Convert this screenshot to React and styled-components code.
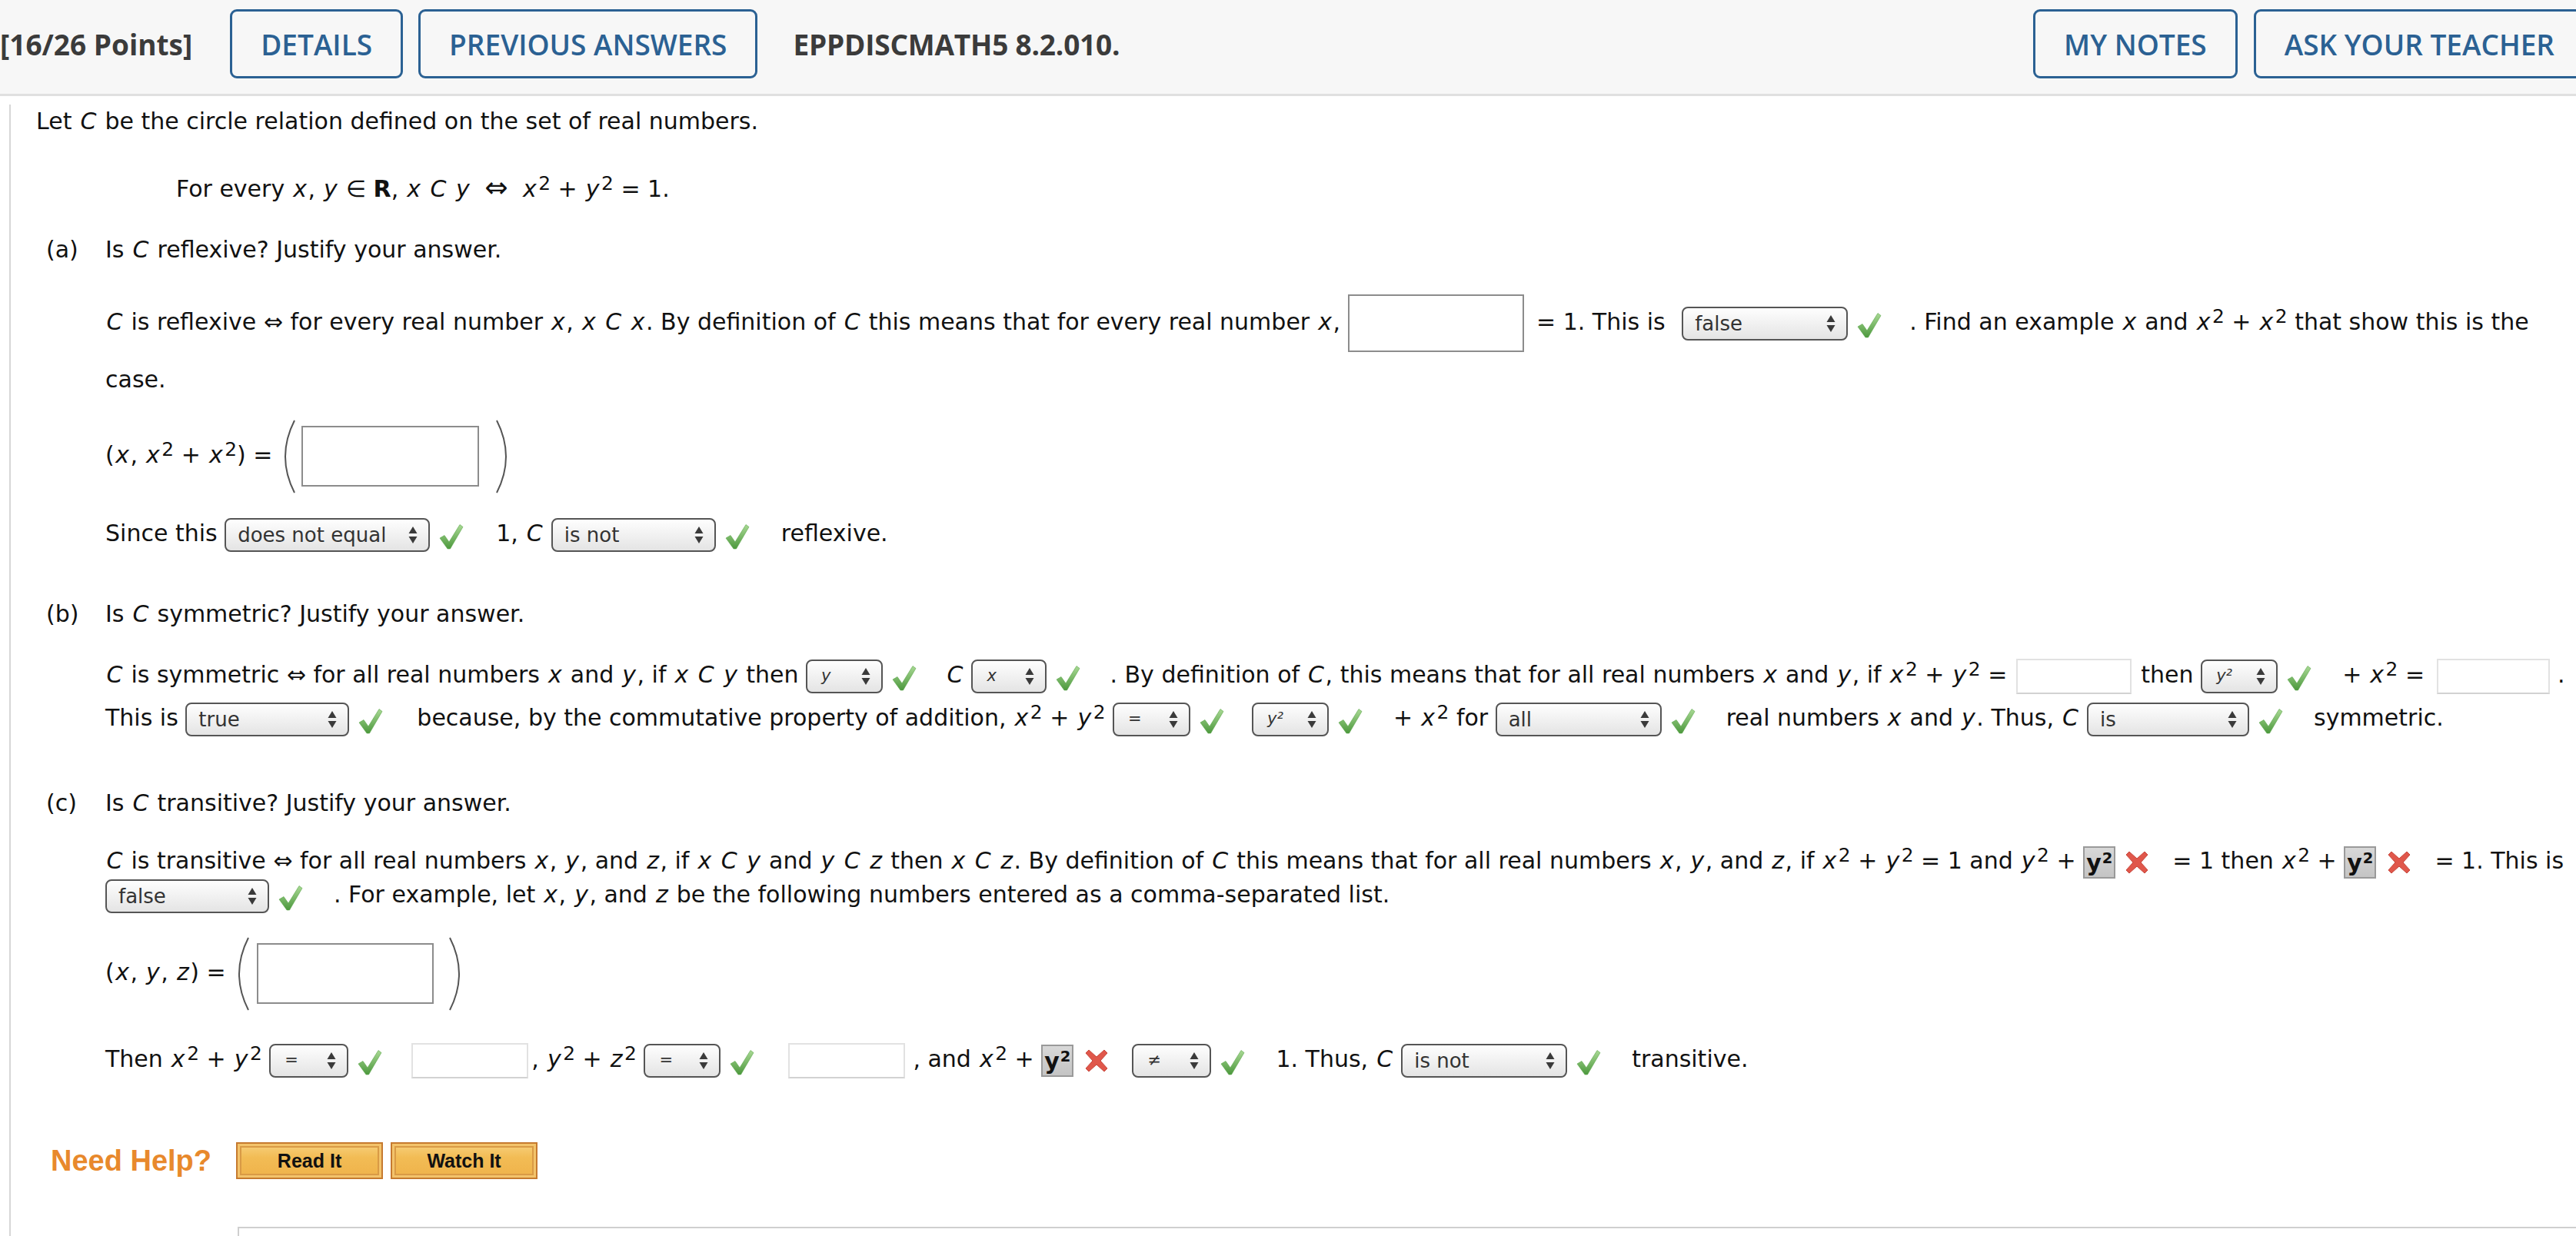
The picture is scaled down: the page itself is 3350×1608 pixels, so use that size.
import React from "react";
import styled, { createGlobalStyle } from "styled-components";

const GlobalStyle = createGlobalStyle`
  html, body { margin: 0; padding: 0; background: #fff; }
  body {
    font-family: "DejaVu Sans", Verdana, sans-serif;
    color: #111;
    overflow: hidden;
  }
  sup {
    font-size: 0.83em;
    vertical-align: 0.36em;
    line-height: 0;
    margin-left: 1px;
  }
`;

const Page = styled.div`
  width: 3350px;
  height: 1608px;
  overflow: hidden;
`;

const Header = styled.header`
  display: flex;
  align-items: center;
  box-sizing: border-box;
  height: 125px;
  padding-bottom: 8px;
  background: #f7f7f7;
  border-bottom: 3px solid #e0e0e0;
  font-family: "Open Sans", sans-serif;
  font-size: 37px;
  overflow: hidden;
`;

const Points = styled.div`
  font-weight: 700;
  color: #3b3b3b;
  margin-right: 49px;
  flex-shrink: 0;
`;

const ButtonGroup = styled.div`
  display: flex;
  gap: ${(p) => p.$gap || 20}px;
  flex-shrink: 0;
  ${(p) => p.$right && "margin-left: auto; margin-right: -12px;"}
`;

const HeaderButton = styled.div`
  display: flex;
  align-items: center;
  box-sizing: border-box;
  height: 90px;
  padding: 0 37px;
  border: 3px solid #2b6193;
  border-radius: 9px;
  color: #2b6193;
  font-weight: 600;
  flex-shrink: 0;
`;

const QuestionId = styled.div`
  font-weight: 700;
  color: #3b3b3b;
  margin-left: 46px;
  letter-spacing: -0.2px;
  flex-shrink: 0;
`;

const Body = styled.main`
  margin-left: 12px;
  border-left: 2px solid #d6d6d6;
  padding-left: 33px;
  height: 1483px;
  font-size: 30px;
`;

const Line = styled.div`
  height: ${(p) => p.$h || 44}px;
  line-height: ${(p) => p.$h || 44}px;
  margin-top: ${(p) => p.$mt || 0}px;
  padding-left: ${(p) => p.$indent || 0}px;
  white-space: nowrap;
`;

const PartLabel = styled.span`
  display: inline-block;
  width: 77px;
`;

const I = styled.i`
  font-style: italic;
  padding: 0 1.5px;
`;

const B = styled.b`
  font-weight: 700;
`;

const Arrow = styled.span`
  font-size: ${(p) => p.$size || 30}px;
  margin: 0 ${(p) => p.$space || 0}px;
`;

const SelectBox = styled.span`
  display: inline-flex;
  align-items: center;
  justify-content: space-between;
  box-sizing: border-box;
  width: ${(p) => p.$w}px;
  height: 44px;
  margin-left: ${(p) => p.$ml || 0}px;
  padding: 0 14px 0 ${(p) => (p.$small ? 18 : 15)}px;
  border: 2px solid #555;
  border-radius: 8px;
  background: linear-gradient(#fefefe, #f1f1f1 50%, #e4e4e4);
  font-family: "DejaVu Sans", sans-serif;
  font-size: ${(p) => (p.$small ? 21 : 26)}px;
  color: #333;
  line-height: 1;
  vertical-align: middle;
`;

const SelectText = styled.span`
  font-style: ${(p) => (p.$italic ? "italic" : "normal")};
  white-space: nowrap;
`;

const ArrowSvg = styled.svg`
  flex-shrink: 0;
  margin-left: 8px;
`;

const Select = ({ w, ml, small, italic, children }) => (
  <SelectBox $w={w} $ml={ml} $small={small}>
    <SelectText $italic={italic}>{children}</SelectText>
    <ArrowSvg width="12" height="24" viewBox="0 0 12 24">
      <path d="M6 1 L11.5 10 L0.5 10 Z" fill="#3a3a3a" />
      <path d="M0.5 14 L11.5 14 L6 23 Z" fill="#3a3a3a" />
    </ArrowSvg>
  </SelectBox>
);

const CheckSvg = styled.svg`
  vertical-align: middle;
  margin: 4px ${(p) => p.$after ?? 36}px 0 12px;
`;

const Check = ({ after }) => (
  <CheckSvg $after={after} width="32" height="34" viewBox="0 0 32 34">
    <defs>
      <linearGradient id="chkfill" x1="0" y1="0" x2="0" y2="1">
        <stop offset="0" stopColor="#a9d994" />
        <stop offset="1" stopColor="#4c983d" />
      </linearGradient>
    </defs>
    <path
      d="M1 19 L7 15.5 L13 24 L27 1.5 L31 4.5 L14.5 33 L11 33 Z"
      fill="url(#chkfill)"
      stroke="#5aa64a"
      strokeWidth="0.6"
    />
  </CheckSvg>
);

const CrossSvg = styled.svg`
  vertical-align: middle;
  margin: 0 ${(p) => p.$after ?? 30}px 0 ${(p) => p.$before ?? 14}px;
`;

const Cross = ({ after, before }) => (
  <CrossSvg $after={after} $before={before} width="32" height="32" viewBox="0 0 32 32">
    <path
      d="M6 2 L16 11 L26 2 L30 6 L21 16 L30 26 L26 30 L16 21 L6 30 L2 26 L11 16 L2 6 Z"
      fill="#e0574b"
      stroke="#c7463b"
      strokeWidth="1"
      strokeLinejoin="round"
    />
  </CrossSvg>
);

const TextInput = styled.span`
  display: inline-block;
  box-sizing: border-box;
  width: ${(p) => p.$w}px;
  height: ${(p) => p.$h}px;
  margin: 0 ${(p) => p.$mr ?? p.$mx ?? 8}px 0 ${(p) => p.$mx ?? 8}px;
  border: 2px solid ${(p) => (p.$light ? "#e2e2e2" : "#8c8c8c")};
  ${(p) => p.$light && "border-bottom-color: #d2d2d2;"}
  background: #fff;
  vertical-align: middle;
`;

const Marked = styled.span`
  display: inline-block;
  box-sizing: border-box;
  height: 42px;
  padding: 0 2px;
  line-height: 40px;
  background: linear-gradient(#d8d8d8, #c4c4c4);
  border: 2px solid #9a9a9a;
  font-weight: 700;
  vertical-align: middle;

  sup {
    font-size: 0.65em;
    vertical-align: 0.5em;
  }
`;

const ParenSvg = styled.svg`
  vertical-align: middle;
  margin: 0 ${(p) => p.$mr ?? 4}px 0 ${(p) => p.$ml ?? 4}px;
`;

const Paren = ({ right, ml, mr }) => (
  <ParenSvg $ml={ml} $mr={mr} width="26" height="98" viewBox="0 0 26 98">
    <path
      d={right ? "M3 2 Q27 49 3 96" : "M23 2 Q-1 49 23 96"}
      stroke="#555"
      strokeWidth="2"
      fill="none"
    />
  </ParenSvg>
);

const HelpRow = styled.div`
  display: flex;
  align-items: center;
  gap: 10px;
  height: 50px;
  margin-top: ${(p) => p.$mt || 0}px;
  padding-left: 19px;
`;

const HelpText = styled.span`
  font-family: "Liberation Sans", Arial, sans-serif;
  font-weight: 700;
  font-size: 38px;
  color: #e8892c;
  margin-right: 22px;
`;

const HelpButton = styled.div`
  display: flex;
  align-items: center;
  justify-content: center;
  box-sizing: border-box;
  width: 191px;
  height: 48px;
  border: 2px solid #c67a2f;
  background: linear-gradient(#f7d07c, #f2bc55 40%, #efb24a);
  box-shadow: inset 0 0 0 3px #f3c36b, inset 0 0 0 5px #d99a45;
  font-family: "Liberation Sans", Arial, sans-serif;
  font-weight: 700;
  font-size: 25px;
  color: #111;
`;

const NextBox = styled.div`
  margin-top: ${(p) => p.$mt || 0}px;
  margin-left: 262px;
  height: 200px;
  border-top: 2px solid #cfcfcf;
  border-left: 2px solid #cfcfcf;
`;

const App = () => {
  return (
    <Page>
      <GlobalStyle />
      <Header>
        <Points>[16/26 Points]</Points>
        <ButtonGroup>
          <HeaderButton>DETAILS</HeaderButton>
          <HeaderButton>PREVIOUS ANSWERS</HeaderButton>
        </ButtonGroup>
        <QuestionId>EPPDISCMATH5 8.2.010.</QuestionId>
        <ButtonGroup $right $gap={21}>
          <HeaderButton>MY NOTES</HeaderButton>
          <HeaderButton>ASK YOUR TEACHER</HeaderButton>
        </ButtonGroup>
      </Header>

      <Body>
        <Line $mt={11}>
          Let <I>C</I> be the circle relation defined on the set of real numbers.
        </Line>
        <Line $mt={42} $indent={182}>
          For every <I>x</I>, <I>y</I> ∈ <B>R</B>, <I>x</I> <I>C</I> <I>y</I>
          <Arrow $size={36} $space={18}>⇔</Arrow>
          <I>x</I>
          <sup>2</sup> + <I>y</I>
          <sup>2</sup> = 1.
        </Line>

        <Line $mt={37} $indent={13}>
          <PartLabel>(a)</PartLabel>Is <I>C</I> reflexive? Justify your answer.
        </Line>
        <Line $h={80} $mt={32} $indent={90}>
          <I>C</I> is reflexive <Arrow>⇔</Arrow> for every real number <I>x</I>,{" "}
          <I>x</I> <I>C</I> <I>x</I>. By definition of <I>C</I> this means that for
          every real number <I>x</I>,
          <TextInput $w={229} $h={75} $mx={10} $mr={16} />= 1. This is{" "}
          <Select w={216} ml={12}>
            false
          </Select>
          <Check />. Find an example <I>x</I> and <I>x</I>
          <sup>2</sup> + <I>x</I>
          <sup>2</sup> that show this is the
        </Line>
        <Line $mt={13} $indent={90}>
          case.
        </Line>
        <Line $h={110} $mt={21} $indent={90}>
          (<I>x</I>, <I>x</I>
          <sup>2</sup> + <I>x</I>
          <sup>2</sup>) =
          <Paren ml={6} mr={6} />
          <TextInput $w={231} $h={79} $mx={0} />
          <Paren right ml={20} />
        </Line>
        <Line $h={50} $mt={22} $indent={90}>
          Since this <Select w={267}>does not equal</Select>
          <Check after={42} />
          1, <I>C</I> <Select w={214}>is not</Select>
          <Check after={41} />
          reflexive.
        </Line>

        <Line $mt={58} $indent={13}>
          <PartLabel>(b)</PartLabel>Is <I>C</I> symmetric? Justify your answer.
        </Line>
        <Line $h={50} $mt={32} $indent={90}>
          <I>C</I> is symmetric <Arrow>⇔</Arrow> for all real numbers <I>x</I> and{" "}
          <I>y</I>, if <I>x</I> <I>C</I> <I>y</I> then{" "}
          <Select w={100} small italic>
            y
          </Select>
          <Check after={38} />
          <I>C</I>{" "}
          <Select w={98} small italic>
            x
          </Select>
          <Check after={38} />. By definition of <I>C</I>, this means that for all real
          numbers <I>x</I> and <I>y</I>, if <I>x</I>
          <sup>2</sup> + <I>y</I>
          <sup>2</sup> =
          <TextInput $w={150} $h={46} $mx={12} $light />
          then{" "}
          <Select w={100} small italic>
            y²
          </Select>
          <Check after={40} />+ <I>x</I>
          <sup>2</sup> =
          <TextInput $w={147} $h={46} $mx={16} $mr={10} $light />.
        </Line>
        <Line $h={50} $mt={6} $indent={90}>
          This is <Select w={213}>true</Select>
          <Check after={44} />
          because, by the commutative property of addition, <I>x</I>
          <sup>2</sup> + <I>y</I>
          <sup>2</sup>{" "}
          <Select w={101} small>
            =
          </Select>
          <Check after={36} />
          <Select w={100} small italic>
            y²
          </Select>
          <Check after={40} />+ <I>x</I>
          <sup>2</sup> for <Select w={216}>all</Select>
          <Check after={40} />
          real numbers <I>x</I> and <I>y</I>. Thus, <I>C</I>{" "}
          <Select w={211}>is</Select>
          <Check after={40} />
          symmetric.
        </Line>

        <Line $mt={64} $indent={13}>
          <PartLabel>(c)</PartLabel>Is <I>C</I> transitive? Justify your answer.
        </Line>
        <Line $mt={31} $indent={90}>
          <I>C</I> is transitive <Arrow>⇔</Arrow> for all real numbers <I>x</I>,{" "}
          <I>y</I>, and <I>z</I>, if <I>x</I> <I>C</I> <I>y</I> and <I>y</I> <I>C</I>{" "}
          <I>z</I> then <I>x</I> <I>C</I> <I>z</I>. By definition of <I>C</I> this
          means that for all real numbers <I>x</I>, <I>y</I>, and <I>z</I>, if{" "}
          <I>x</I>
          <sup>2</sup> + <I>y</I>
          <sup>2</sup> = 1 and <I>y</I>
          <sup>2</sup> +{" "}
          <Marked>
            y<sup>2</sup>
          </Marked>
          <Cross before={12} />= 1 then <I>x</I>
          <sup>2</sup> +{" "}
          <Marked>
            y<sup>2</sup>
          </Marked>
          <Cross />= 1. This is
        </Line>
        <Line $indent={90}>
          <Select w={213}>false</Select>
          <Check after={40} />. For example, let <I>x</I>, <I>y</I>, and <I>z</I> be
          the following numbers entered as a comma-separated list.
        </Line>
        <Line $h={110} $mt={24} $indent={90}>
          (<I>x</I>, <I>y</I>, <I>z</I>) =
          <Paren ml={6} mr={8} />
          <TextInput $w={230} $h={79} $mx={0} />
          <Paren right ml={18} />
        </Line>
        <Line $h={50} $mt={33} $indent={90}>
          Then <I>x</I>
          <sup>2</sup> + <I>y</I>
          <sup>2</sup>{" "}
          <Select w={103} small>
            =
          </Select>
          <Check after={38} />
          <TextInput $w={152} $h={46} $mx={0} $mr={4} $light />, <I>y</I>
          <sup>2</sup> + <I>z</I>
          <sup>2</sup>{" "}
          <Select w={100} small>
            =
          </Select>
          <Check after={44} />
          <TextInput $w={152} $h={46} $mx={0} $mr={10} $light />, and <I>x</I>
          <sup>2</sup> +{" "}
          <Marked>
            y<sup>2</sup>
          </Marked>
          <Cross after={30} />
          <Select w={103} small>
            ≠
          </Select>
          <Check after={40} />
          1. Thus, <I>C</I> <Select w={216}>is not</Select>
          <Check after={40} />
          transitive.
        </Line>

        <HelpRow $mt={82}>
          <HelpText>Need Help?</HelpText>
          <HelpButton>Read It</HelpButton>
          <HelpButton>Watch It</HelpButton>
        </HelpRow>
        <NextBox $mt={61} />
      </Body>
    </Page>
  );
};

export default App;
